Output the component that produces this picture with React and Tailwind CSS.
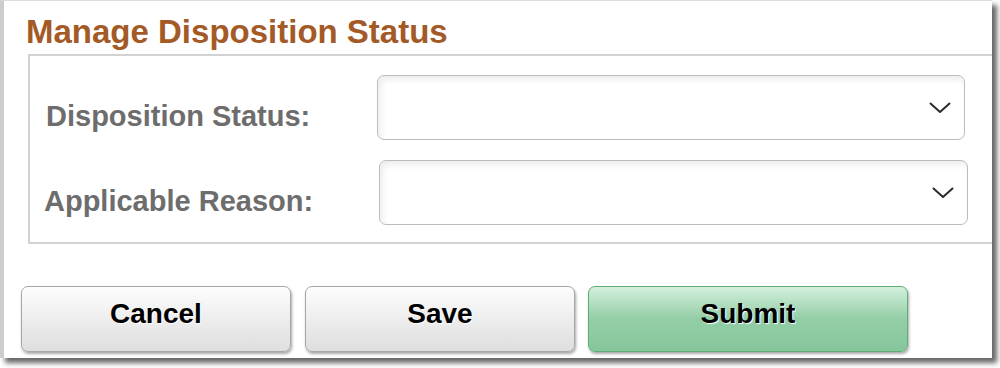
import { useState } from "react";

const font = { fontFamily: '"Liberation Sans", Arial, sans-serif' };

function Chevron() {
  return (
    <svg width="22" height="12" viewBox="0 0 22 12" className="shrink-0">
      <path d="M1.5 1.5 L11 10 L20.5 1.5" fill="none" stroke="#2b2b2b" strokeWidth="2" strokeLinecap="round" strokeLinejoin="round" />
    </svg>
  );
}

// Dropdown styled like the old PeopleSoft select boxes
function SelectBox({ className }) {
  return (
    <div
      className={`h-[65px] rounded-[7px] border-[1.5px] border-[#bcbcbc] bg-white shadow-[inset_3px_4px_6px_rgba(0,0,0,0.07)] flex items-center justify-end pr-[13px] ${className}`}
    >
      <Chevron />
    </div>
  );
}

function Button({ label, green, className }) {
  const base = green
    ? "border-[#5fae78] bg-gradient-to-b from-[#d3efdc] via-[#93cea7] to-[#86c69b]"
    : "border-[#a6a6a6] bg-gradient-to-b from-[#fdfdfd] to-[#dedede]";
  return (
    <button
      className={`h-[66px] rounded-[7px] border-[1.5px] ${base} shadow-[1px_2px_3px_rgba(0,0,0,0.35)] flex items-center justify-center pb-[10px] text-[28px] leading-[32px] font-bold text-black [text-shadow:1px_1px_1px_#ffffff] ${className}`}
    >
      {label}
    </button>
  );
}

export default function App() {
  const [status] = useState("");

  return (
    <div className="w-[1000px] h-[368px] bg-white overflow-hidden" style={font}>
      <div className="w-[992px] h-[358px] bg-white border-l-[4px] border-l-[#cdcdcd] border-t border-t-[#dedede] shadow-[5px_5px_5px_rgba(0,0,0,0.6)] flex flex-col">
        <h1 className="ml-[22px] mt-[13px] text-[33px] leading-[36px] font-bold text-[#a45a27]">
          Manage Disposition Status
        </h1>

        {/* group box */}
        <div className="ml-[24px] mt-[4px] h-[190px] border-2 border-r-0 border-[#d2d2d2] flex flex-col pt-[19px] gap-[20px]">
          <div className="flex items-start">
            <label className="pl-[16px] w-[347px] pt-[25px] text-[29px] leading-[33px] font-bold text-[#6d6d6d]">
              Disposition Status:
            </label>
            <SelectBox className="w-[588px]" />
          </div>
          <div className="flex items-start">
            <label className="pl-[14px] w-[349px] pt-[25px] text-[29px] leading-[33px] font-bold text-[#6d6d6d]">
              Applicable Reason:
            </label>
            <SelectBox className="w-[589px] h-[64px]" />
          </div>
        </div>

        <div className="flex mt-[42px] ml-[17px]">
          <Button label="Cancel" className="w-[270px]" />
          <Button label="Save" className="w-[270px] ml-[14px]" />
          <Button label="Submit" green className="w-[320px] ml-[13px]" />
        </div>
        {status}
      </div>
    </div>
  );
}
